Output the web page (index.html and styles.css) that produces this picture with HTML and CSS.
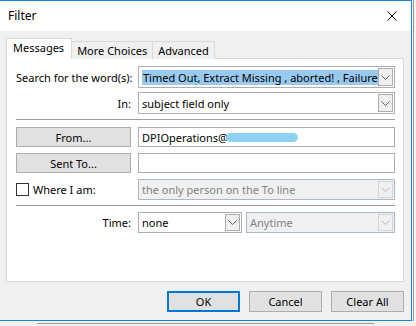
FILE: index.html
```html
<!DOCTYPE html>
<html lang="en">
<head>
    <meta charset="UTF-8">
    <title>Filter</title>
    <link rel="stylesheet" href="styles.css">
</head>
<body>
    <div class="screen">
        <div class="dialog">
            <!-- title bar -->
            <div class="titlebar">
                <span class="title">Filter</span>
                <svg class="close" width="10" height="10" viewBox="0 0 10 10">
                    <path d="M0.5 0.5 L9.5 9.5 M9.5 0.5 L0.5 9.5" stroke="#000" stroke-width="1" fill="none"/>
                </svg>
            </div>

            <div class="dialog-body">
                <div class="tabs">
                    <div class="tab active">Messages</div>
                    <div class="tab">More Choices</div>
                    <div class="tab">Advanced</div>
                </div>

                <div class="panel">
                    <div class="row row-search">
                        <span class="lbl">Search for the word(s):</span>
                        <div class="combo">
                            <span class="value"><span class="selected">Timed Out, Extract Missing , aborted! , Failure</span><span class="caret"></span></span>
                            <span class="arrow"><svg width="9" height="5" viewBox="0 0 9 5"><path d="M0.5 0.5 L4.5 4.5 L8.5 0.5" stroke="#606060" fill="none"/></svg></span>
                        </div>
                    </div>
                    <div class="row row-in">
                        <span class="lbl">In:</span>
                        <div class="combo">
                            <span class="value">subject field only</span>
                            <span class="arrow"><svg width="9" height="5" viewBox="0 0 9 5"><path d="M0.5 0.5 L4.5 4.5 L8.5 0.5" stroke="#606060" fill="none"/></svg></span>
                        </div>
                    </div>

                    <div class="sep sep-1"></div>

                    <div class="row row-from">
                        <button class="btn">From...</button>
                        <div class="field">DPIOperations@<span class="smudge"></span></div>
                    </div>
                    <div class="row row-sent">
                        <button class="btn">Sent To...</button>
                        <div class="field"></div>
                    </div>
                    <div class="row row-where">
                        <label class="check"><span class="box"></span>Where I am:</label>
                        <div class="combo disabled">
                            <span class="value">the only person on the To line</span>
                            <span class="arrow"><svg width="9" height="5" viewBox="0 0 9 5"><path d="M0.5 0.5 L4.5 4.5 L8.5 0.5" stroke="#b8b8b8" fill="none"/></svg></span>
                        </div>
                    </div>

                    <div class="sep sep-2"></div>

                    <div class="row row-time">
                        <span class="lbl">Time:</span>
                        <div class="pair">
                            <div class="combo combo-none">
                                <span class="value">none</span>
                                <span class="arrow"><svg width="9" height="5" viewBox="0 0 9 5"><path d="M0.5 0.5 L4.5 4.5 L8.5 0.5" stroke="#606060" fill="none"/></svg></span>
                            </div>
                            <div class="combo disabled combo-any">
                                <span class="value">Anytime</span>
                                <span class="arrow"><svg width="9" height="5" viewBox="0 0 9 5"><path d="M0.5 0.5 L4.5 4.5 L8.5 0.5" stroke="#b8b8b8" fill="none"/></svg></span>
                            </div>
                        </div>
                    </div>
                </div>

                <div class="actions">
                    <button class="btn btn-ok">OK</button>
                    <button class="btn">Cancel</button>
                    <button class="btn">Clear All</button>
                </div>
            </div>
        </div>
        <div class="backdrop-edge"></div>
    </div>
    <div class="under"><span class="under-line"></span></div>
</body>
</html>
```

FILE: styles.css
```css
body {
    margin: 0;
    width: 416px;
    height: 326px;
    overflow: hidden;
    background: #f3f3f3;
    font-family: 'Noto Sans', sans-serif;
    font-size: 11px;
    color: #000;
}

.screen {
    display: flex;
}

/* window frame */
.dialog {
    width: 411px;
    height: 319px;
    border-top: 1px solid #1883d7;
    border-right: 1px solid #1883d7;
    border-bottom: 1px solid #1883d7;
    background: #f0f0f0;
    display: flex;
    flex-direction: column;
}

.backdrop-edge {
    width: 1px;
    height: 321px;
    margin-left: 1px;
    background: #9a9a9a;
}

.titlebar {
    height: 30px;
    background: #fff;
    display: flex;
    align-items: center;
    justify-content: space-between;
    padding: 0 10px 0 8px;
}

.title {
    font-size: 12px;
    margin-top: -1px;
}

.close {
    margin-right: 4px;
    margin-top: -1px;
}

.dialog-body {
    padding: 7px 0 0 6px;
}

/* tabs */
.tabs {
    display: flex;
    align-items: flex-end;
    height: 21px;
    margin-bottom: -1px;
    position: relative;
    z-index: 1;
}

.tab {
    height: 17px;
    line-height: 17px;
    padding: 0 5px 0 5px;
    border: 1px solid #d9d9d9;
    border-bottom: none;
    border-left: none;
    background: #f0f0f0;
}

.tab.active {
    height: 20px;
    line-height: 18px;
    padding: 0 7px 0 6px;
    background: #fff;
    border-left: 1px solid #d9d9d9;
}

.panel {
    width: 379px;
    height: 215px;
    border: 1px solid #d9d9d9;
    background: #fff;
    padding: 7px 8px 0 9px;
}

/* form rows */
.row {
    display: grid;
    grid-template-columns: 115px 257px;
    column-gap: 7px;
    align-items: center;
    white-space: nowrap;
}

.row-search { height: 22px; }
.row-in { height: 22px; margin-top: 4px; }
.row-from { height: 20px; margin-top: 7px; }
.row-sent { height: 20px; margin-top: 6px; }
.row-where { height: 21px; margin-top: 6px; }
.row-time { height: 21px; margin-top: 6px; }

.lbl {
    text-align: right;
}

.sep {
    height: 0;
    border-top: 1px solid #a0a0a0;
    width: 379px;
}

.sep-1 { margin-top: 5px; }
.sep-2 { margin-top: 5px; }

.combo {
    height: 100%;
    box-sizing: border-box;
    border: 1px solid #abadb3;
    background: #fff;
    display: flex;
    align-items: center;
    padding: 0 1px 0 2px;
}

.combo .value {
    flex: 1;
    padding-left: 1px;
    white-space: nowrap;
    overflow: hidden;
    display: flex;
    align-items: center;
}

.selected {
    background: #99c9ef;
    padding: 0 1px;
    line-height: 15px;
}

.caret {
    display: inline-block;
    width: 1px;
    height: 15px;
    background: #000;
}

.arrow {
    width: 15px;
    height: calc(100% - 2px);
    box-sizing: border-box;
    border: 1px solid #adadad;
    background: #f0f0f0;
    display: flex;
    align-items: center;
    justify-content: center;
}

.combo.disabled {
    background: #f0f0f0;
    border-color: #a9b8cb;
    color: #838383;
}

.combo.disabled .arrow {
    border-color: #d6d6d6;
    background: #f0f0f0;
}

.pair {
    display: flex;
    gap: 4px;
    height: 100%;
}

.combo-none { width: 104px; }
.combo-any { flex: 1; }

.field {
    height: 100%;
    box-sizing: border-box;
    border: 1px solid #abadb3;
    background: #fff;
    padding: 0 3px;
    display: flex;
    align-items: center;
    white-space: nowrap;
}

.smudge {
    display: inline-block;
    width: 72px;
    height: 9px;
    border-radius: 5px;
    background: #8fd1f3;
    margin-left: -2px;
}

/* buttons */
.btn {
    font: inherit;
    color: #000;
    height: 100%;
    border: 1px solid #adadad;
    background: #e1e1e1;
    padding: 0;
}

.check {
    display: flex;
    align-items: center;
    gap: 4px;
}

.box {
    width: 11px;
    height: 11px;
    border: 1px solid #333;
    background: #fff;
}

.actions {
    display: flex;
    justify-content: flex-end;
    gap: 9px;
    width: 398px;
    margin-top: 9px;
    height: 21px;
}

.actions .btn {
    width: 73px;
}

.actions .btn-ok {
    border: 2px solid #0078d7;
}

.under {
    height: 6px;
}

.under-line {
    display: block;
    margin-left: 37px;
    width: 337px;
    height: 1px;
    margin-top: 2px;
    background: #9a9a9a;
}
```
